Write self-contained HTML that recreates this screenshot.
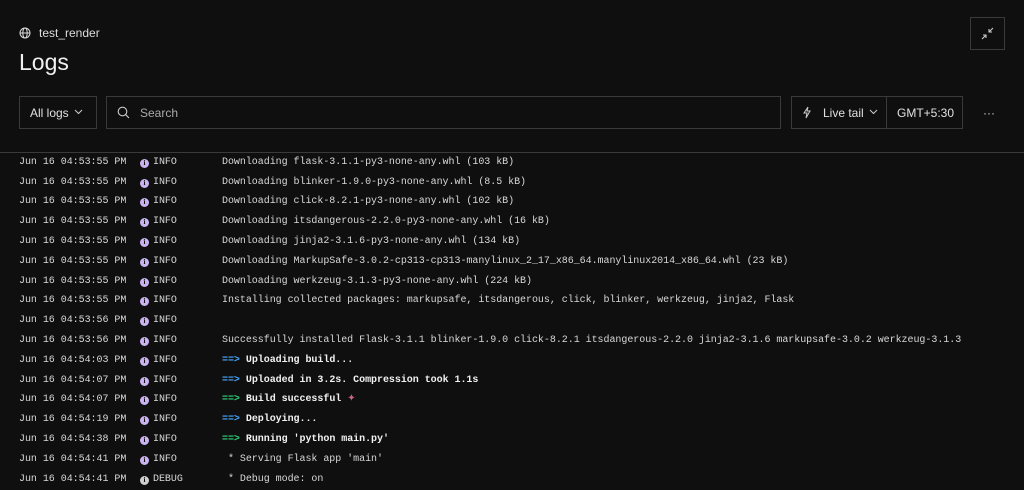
<!DOCTYPE html>
<html><head><style>
body{margin:0;width:1024px;height:486px;background:#0f0f0f;overflow:hidden;font-family:"Liberation Sans",sans-serif;color:#e8e8e8;position:relative}
.abs{position:absolute}
.box{position:absolute;border:1px solid #3a3a3a;box-sizing:border-box}
.row{position:absolute;left:0;height:20px;font-family:"Liberation Mono",monospace;font-size:10px;letter-spacing:-0.04px;color:#d8d8d8;white-space:pre;line-height:20px}
.row span{position:absolute;top:2px}
.t{left:19px}
.ic{left:140px;top:8px!important;width:9px;height:9px;border-radius:50%;background:#c9b3f0;color:#0f0f0f;font-size:7px;line-height:9px;text-align:center;font-weight:bold;font-family:"Liberation Serif",serif}
.ic.d{background:#cfcfcf}
.l{left:153px}
.m{left:222px}
b{font-weight:bold;color:#f2f2f2}
.bl{color:#4aa8ff;font-weight:bold}
.gr{color:#2ed37a;font-weight:bold}
</style></head><body>
<svg class="abs" style="left:19px;top:27px" width="12" height="12" viewBox="0 0 12 12" fill="none" stroke="#ddd" stroke-width="1"><circle cx="6" cy="6" r="5"/><ellipse cx="6" cy="6" rx="2.2" ry="5"/><line x1="1" y1="6" x2="11" y2="6"/></svg>
<div class="abs" style="left:39px;top:26px;font-size:12px;color:#ddd">test_render</div>
<div class="abs" style="left:19px;top:49px;font-size:23px;color:#f0f0f0">Logs</div>
<div class="box" style="left:970px;top:17px;width:35px;height:33px"></div>
<svg class="abs" style="left:981px;top:27px" width="13" height="13" viewBox="0 0 13 13" fill="none" stroke="#ccc" stroke-width="1.1"><path d="M1 12L5 8M2 8H5V11M12 1L8 5M8 2V5H11"/></svg>
<div class="box" style="left:19px;top:96px;width:78px;height:33px"></div>
<div class="abs" style="left:30px;top:106px;font-size:12px;color:#e0e0e0">All logs</div>
<svg class="abs" style="left:74px;top:109px" width="9" height="6" viewBox="0 0 9 6" fill="none" stroke="#ccc"><path d="M1 1L4.5 4.5L8 1"/></svg>
<div class="box" style="left:106px;top:96px;width:675px;height:33px"></div>
<svg class="abs" style="left:117px;top:106px" width="13" height="13" viewBox="0 0 13 13" fill="none" stroke="#ccc" stroke-width="1.1"><circle cx="5.5" cy="5.5" r="4.3"/><path d="M8.7 8.7L12 12"/></svg>
<div class="abs" style="left:140px;top:106px;font-size:12px;color:#aaa">Search</div>
<div class="box" style="left:791px;top:96px;width:172px;height:33px"></div>
<div class="abs" style="left:886px;top:96px;width:1px;height:33px;background:#3a3a3a"></div>
<svg class="abs" style="left:802px;top:106px" width="10" height="13" viewBox="0 0 10 13" fill="none" stroke="#ccc" stroke-width="1"><path d="M6 1L2 7H5L4 12L8 5H5L6 1Z"/></svg>
<div class="abs" style="left:823px;top:106px;font-size:12px;color:#e0e0e0">Live tail</div>
<svg class="abs" style="left:869px;top:109px" width="9" height="6" viewBox="0 0 9 6" fill="none" stroke="#ccc"><path d="M1 1L4.5 4.5L8 1"/></svg>
<div class="abs" style="left:897px;top:106px;font-size:12px;color:#e0e0e0">GMT+5:30</div>
<div class="abs" style="left:983px;top:106px;font-size:12px;color:#ccc">···</div>
<div class="abs" style="left:0;top:152px;width:1024px;height:1px;background:#3a3a3a"></div>

<div class="row" style="top:151px"><span class="t">Jun 16 04:53:55 PM</span><span class="ic">i</span><span class="l">INFO</span><span class="m">Downloading flask-3.1.1-py3-none-any.whl (103 kB)</span></div>
<div class="row" style="top:171px"><span class="t">Jun 16 04:53:55 PM</span><span class="ic">i</span><span class="l">INFO</span><span class="m">Downloading blinker-1.9.0-py3-none-any.whl (8.5 kB)</span></div>
<div class="row" style="top:190px"><span class="t">Jun 16 04:53:55 PM</span><span class="ic">i</span><span class="l">INFO</span><span class="m">Downloading click-8.2.1-py3-none-any.whl (102 kB)</span></div>
<div class="row" style="top:210px"><span class="t">Jun 16 04:53:55 PM</span><span class="ic">i</span><span class="l">INFO</span><span class="m">Downloading itsdangerous-2.2.0-py3-none-any.whl (16 kB)</span></div>
<div class="row" style="top:230px"><span class="t">Jun 16 04:53:55 PM</span><span class="ic">i</span><span class="l">INFO</span><span class="m">Downloading jinja2-3.1.6-py3-none-any.whl (134 kB)</span></div>
<div class="row" style="top:250px"><span class="t">Jun 16 04:53:55 PM</span><span class="ic">i</span><span class="l">INFO</span><span class="m">Downloading MarkupSafe-3.0.2-cp313-cp313-manylinux_2_17_x86_64.manylinux2014_x86_64.whl (23 kB)</span></div>
<div class="row" style="top:270px"><span class="t">Jun 16 04:53:55 PM</span><span class="ic">i</span><span class="l">INFO</span><span class="m">Downloading werkzeug-3.1.3-py3-none-any.whl (224 kB)</span></div>
<div class="row" style="top:289px"><span class="t">Jun 16 04:53:55 PM</span><span class="ic">i</span><span class="l">INFO</span><span class="m">Installing collected packages: markupsafe, itsdangerous, click, blinker, werkzeug, jinja2, Flask</span></div>
<div class="row" style="top:309px"><span class="t">Jun 16 04:53:56 PM</span><span class="ic">i</span><span class="l">INFO</span></div>
<div class="row" style="top:329px"><span class="t">Jun 16 04:53:56 PM</span><span class="ic">i</span><span class="l">INFO</span><span class="m">Successfully installed Flask-3.1.1 blinker-1.9.0 click-8.2.1 itsdangerous-2.2.0 jinja2-3.1.6 markupsafe-3.0.2 werkzeug-3.1.3</span></div>
<div class="row" style="top:349px"><span class="t">Jun 16 04:54:03 PM</span><span class="ic">i</span><span class="l">INFO</span><span class="m"><span class="bl" style="position:static">==&gt;</span> <b>Uploading build...</b></span></div>
<div class="row" style="top:369px"><span class="t">Jun 16 04:54:07 PM</span><span class="ic">i</span><span class="l">INFO</span><span class="m"><span class="bl" style="position:static">==&gt;</span> <b>Uploaded in 3.2s. Compression took 1.1s</b></span></div>
<div class="row" style="top:388px"><span class="t">Jun 16 04:54:07 PM</span><span class="ic">i</span><span class="l">INFO</span><span class="m"><span class="gr" style="position:static">==&gt;</span> <b>Build successful</b> <span style="position:static;color:#c68">✦</span></span></div>
<div class="row" style="top:408px"><span class="t">Jun 16 04:54:19 PM</span><span class="ic">i</span><span class="l">INFO</span><span class="m"><span class="bl" style="position:static">==&gt;</span> <b>Deploying...</b></span></div>
<div class="row" style="top:428px"><span class="t">Jun 16 04:54:38 PM</span><span class="ic">i</span><span class="l">INFO</span><span class="m"><span class="gr" style="position:static">==&gt;</span> <b>Running 'python main.py'</b></span></div>
<div class="row" style="top:448px"><span class="t">Jun 16 04:54:41 PM</span><span class="ic">i</span><span class="l">INFO</span><span class="m"> * Serving Flask app 'main'</span></div>
<div class="row" style="top:468px"><span class="t">Jun 16 04:54:41 PM</span><span class="ic d">i</span><span class="l">DEBUG</span><span class="m"> * Debug mode: on</span></div>
</body></html>
